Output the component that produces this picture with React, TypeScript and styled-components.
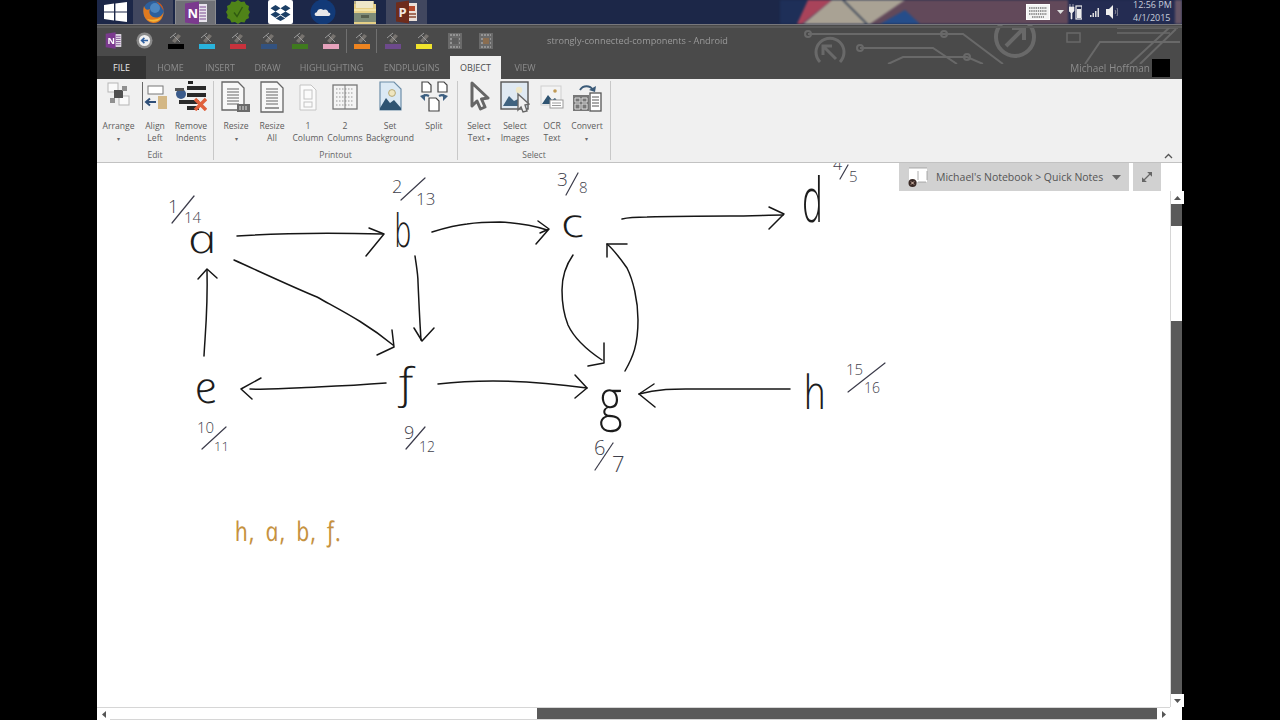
import React from 'react';
import styled, { createGlobalStyle } from 'styled-components';

const GlobalStyle = createGlobalStyle`
    html, body {
        margin: 0;
        padding: 0;
        background: #000;
        font-family: "Open Sans", "Liberation Sans", sans-serif;
    }
`;

// screen position of the note page, ink data below is in screen coordinates
const PAGE_X = 97;
const PAGE_Y = 163;

const Screen = styled.div`
    width: 1280px;
    height: 720px;
    background: #000;
    display: flex;
    justify-content: flex-start;
    overflow: hidden;
`;

const Win = styled.div`
    margin-left: 97px;
    width: 1085px;
    height: 720px;
    display: flex;
    flex-direction: column;
`;

/* ---------- taskbar ---------- */

const Taskbar = styled.div`
    position: relative;
    height: 24px;
    flex: none;
    display: flex;
    background: #1c2748;
    border-bottom: 1px solid #77777c;
    overflow: hidden;
`;

const Wallpaper = styled.svg`
    position: absolute;
    left: 0;
    top: 0;
    filter: blur(0.8px);
`;

const Tile = styled.div<{ $w: number; $state?: 'open' | 'active' }>`
    position: relative;
    width: ${p => p.$w}px;
    height: 24px;
    flex: none;
    display: flex;
    align-items: center;
    justify-content: center;
    box-sizing: border-box;
    background: ${p => (p.$state === 'active' ? '#6f7076' : p.$state === 'open' ? '#41475f' : 'transparent')};
    border: ${p => (p.$state === 'active' ? '1px solid #8b8c90' : 'none')};
    border-bottom: none;
    margin-right: ${p => (p.$state === 'open' ? 2 : 0)}px;
`;

const Tray = styled.div`
    position: relative;
    margin-left: auto;
    height: 24px;
    display: flex;
    align-items: center;
`;

const Clock = styled.div`
    width: 42px;
    margin-left: 15px;
    margin-right: 7px;
    color: #c9cedb;
    font-size: 9px;
    line-height: 13px;
    margin-top: -2px;
    white-space: nowrap;
`;

const TrayIcon = styled.svg<{ $ml: number }>`
    margin-left: ${p => p.$ml}px;
    flex: none;
`;

/* ---------- title band ---------- */

const Band = styled.div`
    position: relative;
    height: 54px;
    flex: none;
    background: #4a4a4a;
    display: flex;
    flex-direction: column;
    overflow: hidden;
`;

const Circuit = styled.svg`
    position: absolute;
    left: 0;
    top: 0;
    filter: blur(0.5px);
`;

const QatRow = styled.div`
    position: relative;
    height: 31px;
    display: flex;
    align-items: center;
    padding-left: 1px;
`;

const QatCell = styled.div<{ $sep?: boolean }>`
    width: 31px;
    height: 24px;
    flex: none;
    box-sizing: border-box;
    display: flex;
    align-items: center;
    justify-content: center;
    border-left: ${p => (p.$sep ? '1px solid #707070' : 'none')};
    border-right: ${p => (p.$sep ? '1px solid #707070' : 'none')};
    filter: blur(0.4px);
`;

const WindowTitle = styled.div`
    margin-left: 46px;
    color: #9a9a9a;
    font-size: 9.2px;
    white-space: nowrap;
    filter: blur(0.6px);
`;

const TabRow = styled.div`
    position: relative;
    height: 23px;
    display: flex;
    align-items: stretch;
`;

const Tab = styled.div<{ $w: number; $kind?: 'file' | 'active' }>`
    width: ${p => p.$w}px;
    flex: none;
    display: flex;
    align-items: center;
    justify-content: center;
    font-size: 9px;
    white-space: nowrap;
    color: ${p => (p.$kind === 'file' ? '#e8e8e8' : p.$kind === 'active' ? '#4c4c4c' : '#8c8c8c')};
    background: ${p => (p.$kind === 'file' ? '#333' : p.$kind === 'active' ? '#f0f0f0' : 'transparent')};
    filter: ${p => (p.$kind ? 'none' : 'blur(0.6px)')};
`;

const Account = styled.div`
    margin-left: auto;
    margin-right: 12px;
    display: flex;
    align-items: center;
    color: #8c8c8c;
    font-size: 10px;
`;

const AccountName = styled.span`
    filter: blur(0.6px);
    margin-right: 2px;
    white-space: nowrap;
`;

const AccountPhoto = styled.div`
    width: 18px;
    height: 18px;
    background: #000;
`;

/* ---------- ribbon ---------- */

const Ribbon = styled.div`
    position: relative;
    height: 84px;
    flex: none;
    box-sizing: border-box;
    background: #f0f0f0;
    border-bottom: 1px solid #c2c2c2;
    display: flex;
    padding-top: 2px;
`;

const Group = styled.div<{ $w: number; $pad: number }>`
    width: ${p => p.$w}px;
    height: 79px;
    flex: none;
    box-sizing: border-box;
    padding: 0 ${p => p.$pad}px;
    border-right: 1px solid #c8c8c8;
    display: flex;
    flex-direction: column;
`;

const GroupButtons = styled.div`
    display: flex;
    height: 70px;
`;

const GroupLabel = styled.div`
    text-align: center;
    font-size: 8.5px;
    line-height: 11px;
    color: #666;
`;

const RibbonButton = styled.div<{ $w: number }>`
    width: ${p => p.$w}px;
    flex: none;
    display: flex;
    flex-direction: column;
    align-items: center;
`;

const ButtonLabel = styled.div`
    color: #5c5c5c;
    font-size: 8.6px;
    line-height: 12px;
    text-align: center;
    white-space: nowrap;
`;

const IconSlot = styled.div`
    height: 39px;
    display: flex;
    align-items: flex-start;
    justify-content: center;
`;

const Caret = styled.span`
    font-size: 6px;
    color: #666;
`;

const Collapse = styled.svg`
    position: absolute;
    right: 9px;
    bottom: 3px;
`;

/* ---------- page ---------- */

const Page = styled.div`
    flex: 1;
    min-height: 0;
    display: grid;
    grid-template-columns: 1fr 12px;
    grid-template-rows: 1fr 13px;
    background: #fff;
`;

const Canvas = styled.div`
    position: relative;
    overflow: hidden;
    background: #fff;
`;

const InkLayer = styled.svg`
    position: absolute;
    left: 0;
    top: 0;
`;

// italic gives the one-storey a and g of the handwriting, the skew stands it upright again
const Letter = styled.span<{ $x: number; $y: number; $size: number; $sx?: number }>`
    position: absolute;
    left: ${p => p.$x - PAGE_X}px;
    top: ${p => p.$y - PAGE_Y - p.$size * 0.888}px;
    font-size: ${p => p.$size}px;
    line-height: 1;
    font-weight: 300;
    font-style: italic;
    color: #1c1c1c;
    white-space: nowrap;
    transform-origin: 0 89%;
    transform: scaleX(${p => p.$sx ?? 1}) skewX(12deg);
`;

const Digit = styled(Letter)`
    font-style: normal;
    color: #3f3f4c;
    transform: none;
`;

const Answer = styled(Letter)`
    color: #c6923f;
    font-weight: 400;
    letter-spacing: 1px;
    word-spacing: 4px;
`;

const NotebookBar = styled.div`
    position: absolute;
    left: 802px;
    top: 0;
    width: 230px;
    height: 28px;
    background: #d1d1d1;
    display: flex;
    align-items: center;
    padding-left: 9px;
    box-sizing: border-box;
    color: #555;
    font-size: 10.5px;
    white-space: nowrap;
`;

const NotebookName = styled.span`
    margin-left: 7px;
    width: 176px;
`;

const ExpandButton = styled.div`
    position: absolute;
    left: 1036px;
    top: 0;
    width: 28px;
    height: 28px;
    background: #d1d1d1;
    display: flex;
    align-items: center;
    justify-content: center;
`;

const VScroll = styled.div`
    margin-top: 28px;
    display: flex;
    flex-direction: column;
    box-sizing: border-box;
    border-left: 1px solid #d6d6d6;
`;

const HScroll = styled.div`
    display: flex;
    box-sizing: border-box;
    border-top: 1px solid #d6d6d6;
    border-bottom: 1px solid #d6d6d6;
`;

const ScrollButton = styled.div`
    flex: none;
    width: 13px;
    height: 13px;
    background: #fff;
    display: flex;
    align-items: center;
    justify-content: center;
`;

const Track = styled.div<{ $size?: number }>`
    flex: ${p => (p.$size ? `0 0 ${p.$size}px` : '1')};
    background: #5a5a5a;
`;

const Thumb = styled.div<{ $size: number }>`
    flex: 0 0 ${p => p.$size}px;
    background: #fff;
`;

const Corner = styled.div`
    background: #fff;
`;

/* ---------- taskbar icons ---------- */

const WindowsLogo = () => (
    <svg width="23" height="20" viewBox="0 0 23 20">
        <path d="M0 3 L10 1.6 V9.4 H0 Z M11.4 1.4 L23 0 V9.4 H11.4 Z M0 10.6 H10 V18.4 L0 17 Z M11.4 10.6 H23 V20 L11.4 18.6 Z" fill="#fff" />
    </svg>
);

const FirefoxIcon = () => (
    <svg width="24" height="24" viewBox="0 0 24 24">
        <circle cx="12.5" cy="11.5" r="10.5" fill="#2d5f9c" />
        <circle cx="14" cy="8" r="5" fill="#4d86c0" />
        <path d="M3 6 C1 12 3 22 12 23 C19 23.5 23 17 22.5 11 C22 15 19 17.5 15 17.5 C10 17.5 7 13 9 9 C6 11 4 9 3 6 Z" fill="#e07a1f" />
        <path d="M6 19 C10 23 17 23 20.5 17 C17 19.5 11 20.5 6 19 Z" fill="#f3b63a" />
        <path d="M15 1.5 C20 3 23 7 22.5 11 C21 7 18 4 15 1.5 Z" fill="#c9571b" />
    </svg>
);

const OneNoteIcon = ({ size = 24 }: { size?: number }) => (
    <svg width={size} height={size} viewBox="0 0 24 24">
        <rect x="14" y="3" width="9" height="18" fill="#e8e4ec" />
        <path d="M15.5 6 H22 M15.5 9 H22 M15.5 12 H22 M15.5 15 H22 M15.5 18 H22" stroke="#7b4a8f" strokeWidth="1.2" />
        <path d="M1 2.5 L15 0.5 V23.5 L1 21.5 Z" fill="#7b3a8e" />
        <text x="3.6" y="17" fontFamily="Open Sans, sans-serif" fontWeight="700" fontSize="13" fill="#fff">N</text>
    </svg>
);

const BadgeIcon = () => (
    <svg width="24" height="24" viewBox="0 0 24 24">
        <path d="M12 0 L15 2 L18.5 1.4 L20 4.4 L23 6 L22.4 9.5 L24 12 L22.4 15 L23 18 L20 19.6 L18.5 22.6 L15 22 L12 24 L9 22 L5.5 22.6 L4 19.6 L1 18 L1.6 15 L0 12 L1.6 9.5 L1 6 L4 4.4 L5.5 1.4 L9 2 Z" fill="#4f8318" />
        <path d="M8 12.5 L11 16.5 L16.5 7" fill="none" stroke="#2f5a10" strokeWidth="1.4" />
    </svg>
);

const DropboxIcon = () => (
    <svg width="25" height="24" viewBox="0 0 25 24">
        <rect x="0" y="0" width="25" height="24" rx="2" fill="#fff" />
        <path d="M7.5 5 L12.5 8.2 L7.5 11.4 L2.5 8.2 Z M17.5 5 L22.5 8.2 L17.5 11.4 L12.5 8.2 Z M7.5 11.4 L12.5 14.6 L7.5 17.8 L2.5 14.6 Z M17.5 11.4 L22.5 14.6 L17.5 17.8 L12.5 14.6 Z M7.8 18.6 L12.5 15.6 L17.2 18.6 L12.5 21 Z" fill="#1c3f66" />
    </svg>
);

const OneDriveIcon = () => (
    <svg width="26" height="24" viewBox="0 0 26 24">
        <circle cx="13" cy="12" r="12.5" fill="#123a78" />
        <path d="M6.5 16 C4 16 4 12.5 6.8 12.3 C7.4 9 11.2 8 13.2 10 C15.6 8.6 18.4 10.2 18.4 12.6 C21 12.6 21 16 18.6 16 Z" fill="#e8e8e8" />
    </svg>
);

const ExplorerIcon = () => (
    <svg width="24" height="24" viewBox="0 0 24 24">
        <rect x="1" y="1" width="20" height="8" fill="#b9b089" />
        <path d="M1 4 H23 V24 H1 Z" fill="#e5cf86" />
        <path d="M3 1 H20 V8 H3 Z" fill="#eee7c8" />
        <rect x="1" y="13" width="22" height="9" fill="#7f8c78" />
        <rect x="8" y="15" width="8" height="3" fill="#565f4f" />
        <rect x="1" y="9" width="22" height="2" fill="#f2e3a6" />
    </svg>
);

const PowerPointIcon = () => (
    <svg width="22" height="24" viewBox="0 0 22 24">
        <rect x="11" y="3" width="10" height="18" fill="#eadfd8" />
        <rect x="13" y="6" width="6" height="5" fill="#b5482a" />
        <path d="M13 14 H20 M13 17 H20" stroke="#8a4a32" strokeWidth="1.4" />
        <path d="M0 2.5 L13 0.5 V23.5 L0 21.5 Z" fill="#6e2c1c" />
        <text x="2.6" y="17" fontFamily="Open Sans, sans-serif" fontWeight="700" fontSize="13" fill="#f0e8e4">P</text>
    </svg>
);

/* ---------- quick access icons ---------- */

const BackIcon = () => (
    <svg width="17" height="17" viewBox="0 0 17 17">
        <circle cx="8.5" cy="8.5" r="8" fill="#8a8a8a" />
        <circle cx="8.5" cy="8.5" r="5.6" fill="#f0f0f0" />
        <path d="M12 8.5 H6 M8.4 5.8 L5.6 8.5 L8.4 11.2" fill="none" stroke="#2f5f9f" strokeWidth="1.6" />
    </svg>
);

const PenIcon = ({ color }: { color: string }) => (
    <svg width="24" height="20" viewBox="0 0 24 20">
        <path d="M8 10 L14 3 L17 5 L11 12 Z" fill="#77736f" />
        <path d="M9 4 L16 11 M6 7 L12 2" stroke="#9a9a9a" strokeWidth="1" />
        <rect x="4" y="13" width="16" height="5" fill={color} />
    </svg>
);

const NoisyIcon = ({ tint }: { tint: string }) => (
    <svg width="20" height="18" viewBox="0 0 20 18">
        <rect x="3" y="1" width="14" height="16" fill="#6a6a6a" />
        <path d="M5 3 H15 M5 7 H15 M5 11 H15 M5 15 H15" stroke="#a2a2a2" strokeWidth="1.5" strokeDasharray="2 1" />
        <rect x="7" y="6" width="6" height="6" fill={tint} />
    </svg>
);

/* ---------- ribbon icons ---------- */

const ArrangeIcon = () => (
    <svg width="24" height="26" viewBox="0 0 24 26">
        <rect x="1" y="2" width="10" height="9" fill="#fafafa" stroke="#b5b5b5" />
        <rect x="12" y="15" width="10" height="9" fill="#fafafa" stroke="#b5b5b5" />
        <rect x="7" y="9" width="9" height="8" fill="#505050" />
        <rect x="15" y="5" width="5" height="5" fill="#909090" />
        <rect x="3" y="17" width="5" height="5" fill="#909090" />
    </svg>
);

const AlignLeftIcon = () => (
    <svg width="27" height="30" viewBox="0 0 27 30">
        <path d="M0.5 1 V29" stroke="#666" />
        <rect x="6" y="5" width="15" height="8" fill="#fff" stroke="#777" />
        <rect x="16" y="15" width="9" height="13" fill="#d3b785" />
        <path d="M14 21 H5 M8 17.5 L4 21 L8 24.5" fill="none" stroke="#2f4f78" strokeWidth="2" />
    </svg>
);

const RemoveIndentsIcon = () => (
    <svg width="32" height="30" viewBox="0 0 32 30">
        <rect x="13" y="0" width="5" height="3" fill="#222" />
        <rect x="12" y="5" width="19" height="4" fill="#2a2a2a" />
        <rect x="12" y="12" width="19" height="4" fill="#2a2a2a" />
        <rect x="4" y="19" width="20" height="4" fill="#2a2a2a" />
        <rect x="12" y="25" width="12" height="4" fill="#2a2a2a" />
        <circle cx="6" cy="13" r="5" fill="#3a5a8a" />
        <rect x="0" y="7" width="9" height="3" fill="#555" />
        <path d="M20 18 L31 29 M31 18 L20 29" stroke="#e0603c" strokeWidth="3.4" />
    </svg>
);

const DocLines = () => <path d="M6 8 H18 M6 11 H18 M6 14 H18 M6 17 H18" stroke="#666" strokeWidth="1" />;

const ResizeIcon = () => (
    <svg width="30" height="32" viewBox="0 0 30 32">
        <path d="M1 1 H17 L23 7 V29 H1 Z" fill="#f8f8f8" stroke="#666" strokeWidth="1.3" />
        <DocLines />
        <path d="M6 20 H18 M6 23 H18" stroke="#666" />
        <rect x="16" y="23" width="13" height="8" fill="#6a6a6a" />
        <path d="M19 25 V29 M22 25 V29 M25 25 V29" stroke="#ddd" />
    </svg>
);

const ResizeAllIcon = () => (
    <svg width="24" height="32" viewBox="0 0 24 32">
        <path d="M1 1 H17 L23 7 V31 H1 Z" fill="#f8f8f8" stroke="#666" strokeWidth="1.3" />
        <DocLines />
        <path d="M6 20 H18 M6 23 H18" stroke="#666" />
        <path d="M5 27 H19" stroke="#999" strokeWidth="2" />
    </svg>
);

const OneColumnIcon = () => (
    <svg width="18" height="27" viewBox="0 0 18 27" style={{ marginTop: 3 }}>
        <path d="M1 1 H12 L17 6 V26 H1 Z" fill="#fbfbfb" stroke="#c4c4c4" />
        <rect x="5" y="6" width="8" height="9" fill="none" stroke="#c4c4c4" />
        <rect x="5" y="18" width="8" height="5" fill="none" stroke="#c4c4c4" />
    </svg>
);

const TwoColumnsIcon = () => (
    <svg width="26" height="26" viewBox="0 0 26 26" style={{ marginTop: 3 }}>
        <rect x="1" y="1" width="24" height="24" fill="#f4f4f4" stroke="#777" strokeWidth="1.3" />
        <path d="M4 5 H22 M4 9 H22 M4 13 H22 M4 17 H22 M4 21 H22" stroke="#999" strokeDasharray="1.5 1.5" />
        <path d="M13 1 V25" stroke="#777" />
    </svg>
);

const BackgroundIcon = () => (
    <svg width="23" height="30" viewBox="0 0 23 30">
        <path d="M1 1 H15 L22 8 V29 H1 Z" fill="#dbe9f4" stroke="#6d8ea8" strokeWidth="1.2" />
        <circle cx="13" cy="12" r="3.4" fill="#efe6c0" stroke="#b5a878" />
        <path d="M1 27 L7 17 L11 22 L15 19 L22 27 V29 H1 Z" fill="#2f5472" />
    </svg>
);

const SplitIcon = () => (
    <svg width="30" height="32" viewBox="0 0 30 32">
        <path d="M3 1 H9 L12 4 V11 H3 Z M19 1 H25 L28 4 V11 H19 Z M10 17 H17 L20 20 V30 H10 Z" fill="#fff" stroke="#444" strokeWidth="1.2" />
        <path d="M10 15 C8 14 6 14 5 15 M20 15 C22 14 24 14 25 15" fill="none" stroke="#3d5f80" strokeWidth="2.2" />
        <path d="M1 15 L6 13 L6 20 Z M29 15 L24 13 L24 20 Z" fill="#3d5f80" />
    </svg>
);

const CursorIcon = () => (
    <svg width="21" height="30" viewBox="0 0 21 30">
        <path d="M3 2 L19 17 L12.5 18 L16 26 L11.5 28 L8 20 L3 25 Z" fill="#f4f4f4" stroke="#666" strokeWidth="3" strokeLinejoin="round" />
    </svg>
);

const SelectImagesIcon = () => (
    <svg width="30" height="32" viewBox="0 0 30 32">
        <rect x="1" y="1" width="27" height="27" fill="#dfe9f2" stroke="#555" strokeWidth="1.4" />
        <circle cx="19" cy="9" r="3.2" fill="#efe8c8" />
        <path d="M3 25 L9 15 L14 20 L18 18 L24 25 Z" fill="#3f6380" />
        <path d="M18 13 L29 23 L25 24 L27 30 L23 31 L21 26 L18 29 Z" fill="#f0f0f0" stroke="#666" strokeWidth="1.4" />
    </svg>
);

const OcrIcon = () => (
    <svg width="24" height="24" viewBox="0 0 24 24" style={{ marginTop: 4 }}>
        <rect x="1" y="1" width="20" height="19" fill="#f3f3f3" stroke="#cfcfcf" />
        <circle cx="15" cy="6" r="1.8" fill="#c09a55" />
        <path d="M2 19 L8 10 L12 15 L15 13 L20 19 Z" fill="#2f5472" />
        <rect x="10" y="15" width="13" height="8" fill="#fff" stroke="#9a9a9a" />
        <path d="M12 18 H21 M12 20.5 H21" stroke="#9a9a9a" />
    </svg>
);

const ConvertIcon = () => (
    <svg width="30" height="28" viewBox="0 0 30 28" style={{ marginTop: 3 }}>
        <path d="M8 6 C11 1 18 1 21 6" fill="none" stroke="#3a5a78" strokeWidth="2" />
        <path d="M17 6 L23 8 L24 2 Z" fill="#3a5a78" />
        <rect x="1" y="11" width="16" height="16" fill="#777" />
        <path d="M3 14 H8 V18 H3 Z M10 14 H15 V18 H10 Z M3 20 H8 V25 H3 Z M10 20 H15 V25 H10 Z" fill="none" stroke="#ddd" />
        <rect x="18" y="9" width="11" height="18" fill="#fff" stroke="#555" strokeWidth="1.3" />
        <path d="M20 13 H27 M20 16 H27 M20 19 H27 M20 22 H27" stroke="#555" />
    </svg>
);

/* ---------- data ---------- */

const qatPens: { color: string; sep?: boolean }[] = [
    { color: '#000' },
    { color: '#29b3dc' },
    { color: '#c8323c' },
    { color: '#33527f' },
    { color: '#3f7a1e' },
    { color: '#e6a2bc' },
    { color: '#ee8420', sep: true },
    { color: '#6d4a8c' },
    { color: '#f0e32c' },
];

const tabs: { name: string; w: number; kind?: 'file' | 'active' }[] = [
    { name: 'FILE', w: 49, kind: 'file' },
    { name: 'HOME', w: 49 },
    { name: 'INSERT', w: 50 },
    { name: 'DRAW', w: 45 },
    { name: 'HIGHLIGHTING', w: 83 },
    { name: 'ENDPLUGINS', w: 77 },
    { name: 'OBJECT', w: 51, kind: 'active' },
    { name: 'VIEW', w: 48 },
];

// char, x, baseline, font size, horizontal scale
const letters: [string, number, number, number, number][] = [
    ['a', 191, 254, 40, 1.3],
    ['b', 396, 247, 46, 0.65],
    ['c', 564, 238, 40, 1.25],
    ['d', 804, 222, 62, 0.6],
    ['e', 197, 403, 44, 1.05],
    ['f', 402, 398, 42, 1.2],
    ['g', 601, 419, 55, 0.85],
    ['h', 806, 410, 47, 0.85],
];

const digits: [string, number, number, number][] = [
    ['1', 168, 213, 18],
    ['14', 184, 223, 15],
    ['2', 392, 193, 18],
    ['13', 416, 205, 17],
    ['3', 557, 187, 19],
    ['8', 579, 193, 15],
    ['4', 833, 170, 16],
    ['5', 849, 182, 15],
    ['15', 846, 375, 15],
    ['16', 864, 393, 14],
    ['6', 594, 456, 20],
    ['7', 612, 472, 22],
    ['10', 197, 433, 15],
    ['11', 214, 452, 13],
    ['9', 404, 439, 18],
    ['12', 419, 452, 14],
];

const strokes = [
    // a -> b
    'M237 236 C280 233 340 233 383 234', 'M369 228 L384 234 L366 256',
    // a -> f
    'M234 260 C265 274 295 288 317 297 C340 310 365 322 393 345',
    'M392 330 L394 347 L377 355',
    // e -> a
    'M204 356 C205 335 208 310 207 270', 'M198 279 L207 269 L217 278',
    // b -> f
    'M415 256 C417 270 418 275 418 282 C419 305 420 325 421 340', 'M414 328 L422 341 L434 328',
    // f -> e
    'M386 383 C360 385 340 386 317 387 C295 388 270 390 250 389', 'M261 378 L241 389 L252 399',
    // f -> g
    'M438 384 C455 382 475 381 493 381 C515 381 550 383 587 388', 'M575 375 L587 388 L575 398',
    // b -> c
    'M432 232 C445 228 455 225 467 224 C480 222 490 222 500 222 C520 223 535 226 547 230',
    'M538 221 L549 229 L540 233 L549 229 L536 244',
    // c -> d
    'M622 219 C630 217 640 217 647 217 C680 216 710 216 730 216 C750 216 770 215 783 215', 'M769 207 L784 214 L769 229',
    // c -> g
    'M573 255 C566 265 562 275 562 290 C562 305 564 315 568 325 C575 340 590 352 602 360', 'M604 343 L604 363 L588 366',
    // g -> c
    'M625 371 C633 357 638 345 638 320 C638 300 633 280 627 268 C620 258 614 250 607 244', 'M607 257 L607 244 L627 244',
    // h -> g
    'M790 389 C750 389 720 389 697 389 C680 389 660 388 639 394', 'M654 384 L639 394 L655 407',
];

const fractionBars = [
    'M194 196 L172 223',
    'M425 178 L401 200',
    'M578 173 L566 195',
    'M848 165 L840 179',
    'M885 363 L848 392',
    'M613 443 L595 470',
    'M226 427 L202 449',
    'M425 427 L406 449',
];

/* ---------- app ---------- */

const App = () => {
    return <Screen>
        <GlobalStyle />
        <Win>
            <Taskbar>
                <Wallpaper width="1085" height="24" viewBox="97 0 1085 24">
                    <path d="M790 0 H1182 V24 H790 Z" fill="#62495a" />
                    <path d="M780 0 H905 L860 24 H780 Z" fill="#1e2f58" />
                    <path d="M808 0 H832 L802 24 H797 Z" fill="#a8435a" />
                    <path d="M832 0 H905 L870 24 H803 Z" fill="#a9a294" />
                    <path d="M843 0 L867 24" stroke="#2e3a50" strokeWidth="1.5" />
                    <path d="M880 24 L905 10 L920 24 Z" fill="#254d8a" />
                    <rect x="1068" y="0" width="107" height="24" fill="#242c52" />
                    <rect x="1175" y="0" width="7" height="24" fill="#655566" />
                </Wallpaper>
                <Tile $w={36}><WindowsLogo /></Tile>
                <Tile $w={40} $state="open"><FirefoxIcon /></Tile>
                <Tile $w={41} $state="active"><OneNoteIcon /></Tile>
                <Tile $w={43}><BadgeIcon /></Tile>
                <Tile $w={42}><DropboxIcon /></Tile>
                <Tile $w={43}><OneDriveIcon /></Tile>
                <Tile $w={42}><ExplorerIcon /></Tile>
                <Tile $w={41} $state="open"><PowerPointIcon /></Tile>
                <Tray>
                    <TrayIcon $ml={0} width="24" height="16" viewBox="0 0 24 16">
                        <rect x="0.5" y="0.5" width="23" height="15" fill="#f4f4f4" stroke="#fff" />
                        <path d="M3 4 H21 M3 7 H21 M3 10 H21 M6 13 H18" stroke="#777" strokeWidth="1.4" strokeDasharray="1.4 0.8" />
                    </TrayIcon>
                    <TrayIcon $ml={7} width="7" height="4" viewBox="0 0 7 4">
                        <path d="M0 0 H7 L3.5 4 Z" fill="#ddd" />
                    </TrayIcon>
                    <TrayIcon $ml={5} width="13" height="16" viewBox="0 0 13 16">
                        <path d="M1 0 V3 M4 0 V3 M0 3 H5 V7 L3 9 V15 H2 V9 L0 7 Z" fill="#eee" stroke="#eee" strokeWidth="0.6" />
                        <rect x="7" y="2" width="6" height="13" fill="none" stroke="#eee" strokeWidth="1.2" />
                        <rect x="8" y="5" width="4" height="9" fill="#eee" />
                    </TrayIcon>
                    <TrayIcon $ml={8} width="9" height="9" viewBox="0 0 9 9">
                        <path d="M0 7 H1.5 V9 H0 Z M2.5 5 H4 V9 H2.5 Z M5 3 H6.5 V9 H5 Z M7.5 0 H9 V9 H7.5 Z" fill="#ddd" />
                    </TrayIcon>
                    <TrayIcon $ml={7} width="12" height="14" viewBox="0 0 12 14">
                        <path d="M0 4 H3 L7 0 V14 L3 10 H0 Z" fill="#eee" />
                        <path d="M9 5 C10 6 10 8 9 9 M11 3 C12 5 12 9 11 11" fill="none" stroke="#889" />
                    </TrayIcon>
                    <Clock>12:56 PM<br />4/1/2015</Clock>
                </Tray>
            </Taskbar>

            <Band>
                <Circuit width="1085" height="39" viewBox="97 25 1085 39" fill="none" stroke="#696969" strokeWidth="2">
                    <path d="M808 34 H963 L1003 64" />
                    <circle cx="808" cy="34" r="3" />
                    <circle cx="944" cy="34" r="3" />
                    <path d="M860 48 H933 L957 64" />
                    <circle cx="860" cy="48" r="3" />
                    <path d="M888 64 L903 57 H967 L983 64" />
                    <circle cx="967" cy="57" r="3" />
                    <circle cx="1015" cy="37" r="19" strokeWidth="4" />
                    <path d="M1006 46 L1024 28 M1012 28 H1024 V40" strokeWidth="4" />
                    <path d="M820 62 A14 14 0 1 1 840 62" strokeWidth="3" />
                    <path d="M836 59 L823 46 M823 55 V46 H832" strokeWidth="3" />
                    <path d="M1085 64 L1100 42 H1180" />
                    <path d="M1130 64 L1170 27 M1140 64 L1176 29" />
                    <path d="M1117 28 H1178 M1117 33 H1170" strokeWidth="1.5" />
                    <rect x="1067" y="33" width="13" height="9" strokeWidth="1.5" />
                    <path d="M97 27 H1182" stroke="#5a5a5a" />
                </Circuit>
                <QatRow>
                    <QatCell><OneNoteIcon size={17} /></QatCell>
                    <QatCell><BackIcon /></QatCell>
                    {qatPens.map(pen => <QatCell key={pen.color} $sep={pen.sep}><PenIcon color={pen.color} /></QatCell>)}
                    <QatCell><NoisyIcon tint="#5e5e5e" /></QatCell>
                    <QatCell><NoisyIcon tint="#8a6d50" /></QatCell>
                    <WindowTitle>strongly-connected-components - Android</WindowTitle>
                </QatRow>
                <TabRow>
                    {tabs.map(tab => <Tab key={tab.name} $w={tab.w} $kind={tab.kind}>{tab.name}</Tab>)}
                    <Account>
                        <AccountName>Michael Hoffman</AccountName>
                        <AccountPhoto />
                    </Account>
                </TabRow>
            </Band>

            <Ribbon>
                <Group $w={117} $pad={3}>
                    <GroupButtons>
                        <RibbonButton $w={37}><IconSlot><ArrangeIcon /></IconSlot><ButtonLabel>Arrange<br /><Caret>▾</Caret></ButtonLabel></RibbonButton>
                        <RibbonButton $w={36}><IconSlot><AlignLeftIcon /></IconSlot><ButtonLabel>Align<br />Left</ButtonLabel></RibbonButton>
                        <RibbonButton $w={36}><IconSlot><RemoveIndentsIcon /></IconSlot><ButtonLabel>Remove<br />Indents</ButtonLabel></RibbonButton>
                    </GroupButtons>
                    <GroupLabel>Edit</GroupLabel>
                </Group>
                <Group $w={244} $pad={4}>
                    <GroupButtons>
                        <RibbonButton $w={36}><IconSlot><ResizeIcon /></IconSlot><ButtonLabel>Resize<br /><Caret>▾</Caret></ButtonLabel></RibbonButton>
                        <RibbonButton $w={36}><IconSlot><ResizeAllIcon /></IconSlot><ButtonLabel>Resize<br />All</ButtonLabel></RibbonButton>
                        <RibbonButton $w={36}><IconSlot><OneColumnIcon /></IconSlot><ButtonLabel>1<br />Column</ButtonLabel></RibbonButton>
                        <RibbonButton $w={38}><IconSlot><TwoColumnsIcon /></IconSlot><ButtonLabel>2<br />Columns</ButtonLabel></RibbonButton>
                        <RibbonButton $w={52}><IconSlot><BackgroundIcon /></IconSlot><ButtonLabel>Set<br />Background</ButtonLabel></RibbonButton>
                        <RibbonButton $w={36}><IconSlot><SplitIcon /></IconSlot><ButtonLabel>Split</ButtonLabel></RibbonButton>
                    </GroupButtons>
                    <GroupLabel>Printout</GroupLabel>
                </Group>
                <Group $w={153} $pad={3}>
                    <GroupButtons>
                        <RibbonButton $w={36}><IconSlot><CursorIcon /></IconSlot><ButtonLabel>Select<br />Text <Caret>▾</Caret></ButtonLabel></RibbonButton>
                        <RibbonButton $w={36}><IconSlot><SelectImagesIcon /></IconSlot><ButtonLabel>Select<br />Images</ButtonLabel></RibbonButton>
                        <RibbonButton $w={38}><IconSlot><OcrIcon /></IconSlot><ButtonLabel>OCR<br />Text</ButtonLabel></RibbonButton>
                        <RibbonButton $w={32}><IconSlot><ConvertIcon /></IconSlot><ButtonLabel>Convert<br /><Caret>▾</Caret></ButtonLabel></RibbonButton>
                    </GroupButtons>
                    <GroupLabel>Select</GroupLabel>
                </Group>
                <Collapse width="9" height="6" viewBox="0 0 9 6">
                    <path d="M1 5 L4.5 1.5 L8 5" fill="none" stroke="#555" strokeWidth="1.3" />
                </Collapse>
            </Ribbon>

            <Page>
                <Canvas>
                    <InkLayer width="1073" height="544" viewBox={`${PAGE_X} ${PAGE_Y} 1073 544`} fill="none" strokeLinecap="round" strokeLinejoin="round">
                        {strokes.map(d => <path key={d} d={d} stroke="#161616" strokeWidth="1.5" />)}
                        {fractionBars.map(d => <path key={d} d={d} stroke="#3b3b4a" strokeWidth="1.2" />)}
                    </InkLayer>
                    {letters.map(([ch, x, y, size, sx]) => <Letter key={ch} $x={x} $y={y} $size={size} $sx={sx}>{ch}</Letter>)}
                    {digits.map(([ch, x, y, size]) => <Digit key={ch + x} $x={x} $y={y} $size={size}>{ch}</Digit>)}
                    <Answer $x={236} $y={541} $size={27} $sx={0.85}>h, a, b, f.</Answer>
                    <NotebookBar>
                        <svg width="21" height="22" viewBox="0 0 21 22">
                            <path d="M1 2 H10 V16 H1 M10 2 H19 V16 H10" fill="#fff" stroke="#999" strokeWidth="0.8" strokeDasharray="9 3" />
                            <circle cx="4.5" cy="17" r="4" fill="#3a2a26" />
                            <path d="M3 15.5 L6 18.5 M6 15.5 L3 18.5" stroke="#e6c8b8" strokeWidth="1" />
                        </svg>
                        <NotebookName>Michael's Notebook &gt; Quick Notes</NotebookName>
                        <svg width="9" height="5" viewBox="0 0 9 5"><path d="M0 0 H9 L4.5 5 Z" fill="#666" /></svg>
                    </NotebookBar>
                    <ExpandButton>
                        <svg width="10" height="10" viewBox="0 0 10 10">
                            <path d="M6 0 H10 V4 Z M0 6 V10 H4 Z M2 8 L8 2" fill="#666" stroke="#666" strokeWidth="1.2" />
                        </svg>
                    </ExpandButton>
                </Canvas>
                <VScroll>
                    <ScrollButton><svg width="7" height="4" viewBox="0 0 7 4"><path d="M0 4 L3.5 0 L7 4 Z" fill="#555" /></svg></ScrollButton>
                    <Track $size={22} />
                    <Thumb $size={95} />
                    <Track />
                    <ScrollButton><svg width="7" height="4" viewBox="0 0 7 4"><path d="M0 0 H7 L3.5 4 Z" fill="#555" /></svg></ScrollButton>
                </VScroll>
                <HScroll>
                    <ScrollButton><svg width="4" height="7" viewBox="0 0 4 7"><path d="M4 0 V7 L0 3.5 Z" fill="#555" /></svg></ScrollButton>
                    <Thumb $size={427} />
                    <Track />
                    <ScrollButton><svg width="4" height="7" viewBox="0 0 4 7"><path d="M0 0 V7 L4 3.5 Z" fill="#555" /></svg></ScrollButton>
                </HScroll>
                <Corner />
            </Page>
        </Win>
    </Screen>;
};

export default App;
